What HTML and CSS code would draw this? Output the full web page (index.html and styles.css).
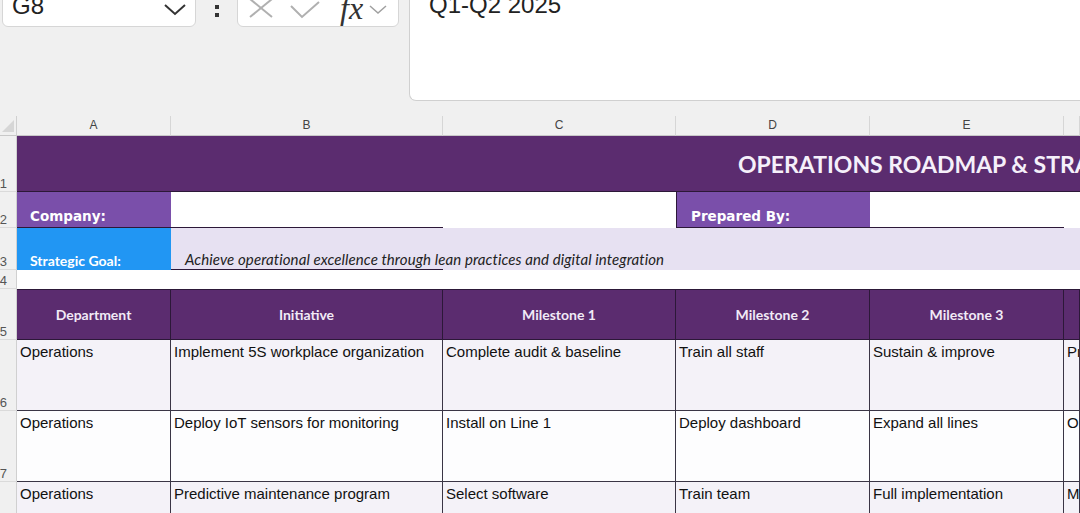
FILE: index.html
```html
<!DOCTYPE html>
<html lang="en">
<head>
    <meta charset="UTF-8">
    <meta name="viewport" content="width=device-width, initial-scale=1.0">
    <title>Operations Roadmap - Sheet</title>
    <link rel="stylesheet" href="styles.css">
</head>
<body>
    <!-- Barra de fórmulas -->
    <div class="toolbar">
        <div class="namebox">
            <span class="cellref">G8</span>
            <svg class="chev" width="24" height="12" viewBox="0 0 24 12"><polyline points="2,1 12,10 22,1" fill="none" stroke="#333" stroke-width="2"/></svg>
        </div>
        <div class="divider">
            <svg width="4" height="12" viewBox="0 0 4 12"><rect x="0" y="0" width="4" height="4" fill="#333"/><rect x="0" y="8" width="4" height="4" fill="#333"/></svg>
        </div>
        <div class="fxbox">
            <svg class="ico-x" width="26" height="20" viewBox="0 0 26 20"><line x1="2" y1="0" x2="24" y2="18" stroke="#b0b0b0" stroke-width="2"/><line x1="24" y1="0" x2="2" y2="18" stroke="#b0b0b0" stroke-width="2"/></svg>
            <svg class="ico-ok" width="30" height="18" viewBox="0 0 30 18"><polyline points="1,5 12,16 29,1" fill="none" stroke="#b0b0b0" stroke-width="2"/></svg>
            <span class="fx">fx</span>
            <svg class="ico-down" width="18" height="10" viewBox="0 0 18 10"><polyline points="1,1 9,8 17,1" fill="none" stroke="#a0a0a0" stroke-width="1.5"/></svg>
        </div>
        <div class="formula">Q1-Q2 2025</div>
    </div>

    <!-- Planilha -->
    <div class="sheet">
        <div class="corner"><svg width="12" height="12" viewBox="0 0 12 12"><polygon points="12,0 12,12 0,12" fill="#d6d6d6"/></svg></div>
        <div class="colhead">A</div>
        <div class="colhead">B</div>
        <div class="colhead">C</div>
        <div class="colhead">D</div>
        <div class="colhead">E</div>
        <div class="colhead"></div>

        <div class="rh">1</div>
        <div class="title">OPERATIONS ROADMAP &amp; STRATEGIC PLAN</div>

        <div class="rh">2</div>
        <div class="label">Company:</div>
        <div class="field"></div>
        <div class="blank"></div>
        <div class="label label-d">Prepared By:</div>
        <div class="field"></div>
        <div class="blank"></div>

        <div class="rh">3</div>
        <div class="goal-label">Strategic Goal:</div>
        <div class="goal">Achieve operational excellence through lean practices and digital integration</div>
        <div class="goal-rest"></div>

        <div class="rh">4</div>
        <div class="spacer"></div>

        <div class="rh">5</div>
        <div class="th">Department</div>
        <div class="th">Initiative</div>
        <div class="th">Milestone 1</div>
        <div class="th">Milestone 2</div>
        <div class="th">Milestone 3</div>
        <div class="th"></div>

        <div class="rh">6</div>
        <div class="td odd">Operations</div>
        <div class="td odd">Implement 5S workplace organization</div>
        <div class="td odd">Complete audit &amp; baseline</div>
        <div class="td odd">Train all staff</div>
        <div class="td odd">Sustain &amp; improve</div>
        <div class="td odd">Production Manager</div>

        <div class="rh">7</div>
        <div class="td">Operations</div>
        <div class="td">Deploy IoT sensors for monitoring</div>
        <div class="td">Install on Line 1</div>
        <div class="td">Deploy dashboard</div>
        <div class="td">Expand all lines</div>
        <div class="td">Operations Manager</div>

        <div class="rh">8</div>
        <div class="td odd">Operations</div>
        <div class="td odd">Predictive maintenance program</div>
        <div class="td odd">Select software</div>
        <div class="td odd">Train team</div>
        <div class="td odd">Full implementation</div>
        <div class="td odd">Maintenance Manager</div>
    </div>
</body>
</html>
```

FILE: styles.css
```css
body {
    margin: 0;
    width: 1080px;
    height: 513px;
    overflow: hidden;
    background-color: #f0f0f0;
    font-family: "Liberation Sans", Arial, sans-serif;
}

/* barra de fórmulas */
.toolbar {
    display: flex;
    align-items: flex-start;
    height: 116px;
    padding-left: 2px;
}

.namebox {
    width: 194px;
    height: 37px;
    margin-top: -10px;
    box-sizing: border-box;
    background-color: white;
    border: 1px solid #d6d6d6;
    border-radius: 6px;
    display: flex;
    align-items: center;
    justify-content: space-between;
    padding: 0 8px 0 9px;
}

.cellref {
    font-size: 24px;
    color: #222;
    margin-top: -6px;
}

.chev {
    margin-top: 2px;
}

.divider {
    width: 41px;
    display: flex;
    justify-content: center;
    padding-top: 5px;
}

.fxbox {
    width: 162px;
    height: 37px;
    margin-top: -10px;
    box-sizing: border-box;
    background-color: white;
    border: 1px solid #d6d6d6;
    border-radius: 6px;
    display: flex;
    align-items: center;
    padding-left: 10px;
}

.ico-x {
    margin-top: 0;
}

.ico-ok {
    margin-left: 16px;
    margin-top: 3px;
}

.fx {
    margin-left: 20px;
    font-family: "Liberation Serif", "Times New Roman", serif;
    font-style: italic;
    font-size: 32px;
    color: #333;
    margin-top: 0;
}

.ico-down {
    margin-left: 6px;
    margin-top: 2px;
}

.formula {
    flex: 1;
    margin-left: 10px;
    margin-top: -10px;
    height: 111px;
    box-sizing: border-box;
    background-color: white;
    border-left: 1px solid #d0d0d0;
    border-bottom: 1px solid #d0d0d0;
    border-bottom-left-radius: 7px;
    padding: 1px 0 0 19px;
    font-size: 24px;
    line-height: 28px;
    color: #222;
}

/* planilha */
.sheet {
    display: grid;
    grid-template-columns: 17px 154px 272px 233px 194px 194px 1fr;
    grid-template-rows: 20px 56px 36px 42px 19px 51px 71px 71px 71px;
}

.sheet > div {
    box-sizing: border-box;
    min-width: 0;
}

.corner {
    border-right: 1px solid #d0d0d0;
    border-bottom: 1px solid #c8c8c8;
    display: flex;
    align-items: flex-end;
    padding: 0 0 3px 2px;
}

.colhead {
    border-right: 1px solid #d6d6d6;
    border-bottom: 1px solid #c8c8c8;
    font-size: 12px;
    color: #444;
    text-align: center;
    line-height: 19px;
}

.rh {
    grid-column: 1;
    background-color: #f0f0f0;
    border-right: 1px solid #d0d0d0;
    border-bottom: 1px solid #dadada;
    font-size: 13px;
    color: #555;
    display: flex;
    align-items: flex-end;
    justify-content: flex-end;
    padding-right: 9px;
    overflow: hidden;
}

.title {
    grid-column: 2 / -1;
    background-color: #5b2c6f;
    border-bottom: 1px solid #2c1838;
    color: #f5f0fa;
    font-family: Lato, "Open Sans", sans-serif;
    font-weight: bold;
    font-size: 23px;
    white-space: nowrap;
    overflow: hidden;
    display: flex;
    align-items: center;
    padding-left: 721px;
}

.label {
    background-color: #7a4faa;
    border-bottom: 1px solid #2c1838;
    color: white;
    font-family: "DejaVu Sans", Verdana, sans-serif;
    font-weight: bold;
    font-size: 13.5px;
    display: flex;
    align-items: flex-end;
    padding: 0 0 3px 13px;
}

.label-d {
    border-left: 1px solid #2c1838;
    padding-left: 14px;
}

.field {
    background-color: white;
    border-bottom: 1px solid #2c1838;
}

.blank {
    background-color: white;
}

.goal-label {
    background-color: #2196f3;
    color: white;
    font-family: Lato, "Open Sans", sans-serif;
    font-weight: bold;
    font-size: 14px;
    display: flex;
    align-items: flex-end;
    padding: 0 0 1px 13px;
}

.goal {
    position: relative;
    z-index: 1;
    background-color: #e7e1f2;
    border-bottom: 1px solid #2c1838;
    font-family: Lato, "Open Sans", sans-serif;
    font-style: italic;
    font-size: 15px;
    letter-spacing: 0.1px;
    color: #222;
    white-space: nowrap;
    display: flex;
    align-items: flex-end;
    padding: 0 0 1px 14px;
}

.goal-rest {
    grid-column: 4 / -1;
    background-color: #e7e1f2;
}

.spacer {
    grid-column: 2 / -1;
    background-color: white;
}

.th {
    background-color: #5b2c6f;
    border-top: 1px solid #2c1838;
    border-right: 1px solid #2c1838;
    border-bottom: 1px solid #2c1838;
    color: #f1eaf6;
    font-family: Lato, "Open Sans", sans-serif;
    font-weight: bold;
    font-size: 14px;
    display: flex;
    align-items: center;
    justify-content: center;
    white-space: nowrap;
    overflow: hidden;
}

.td {
    background-color: #fdfdfe;
    border-right: 1px solid #3a3545;
    border-bottom: 1px solid #3a3545;
    font-size: 15px;
    color: #111;
    padding: 3px 3px 0 3px;
    white-space: nowrap;
    overflow: hidden;
}

.td.odd {
    background-color: #f4f2f8;
}
```
